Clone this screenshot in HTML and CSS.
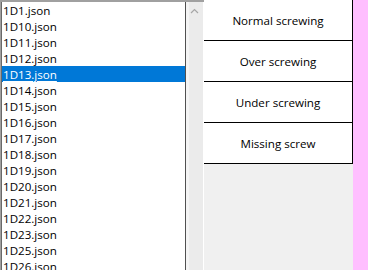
FILE: index.html
```html
<!DOCTYPE html>
<html>
<head>
<meta charset="utf-8">
<link rel="stylesheet" href="styles.css">
</head>
<body>
<div class="app">
  <div class="listbox">
    <ul class="items">
      <li>1D1.json</li>
      <li>1D10.json</li>
      <li>1D11.json</li>
      <li>1D12.json</li>
      <li class="sel"><span>1D13.json</span></li>
      <li>1D14.json</li>
      <li>1D15.json</li>
      <li>1D16.json</li>
      <li>1D17.json</li>
      <li>1D18.json</li>
      <li>1D19.json</li>
      <li>1D20.json</li>
      <li>1D21.json</li>
      <li>1D22.json</li>
      <li>1D23.json</li>
      <li>1D25.json</li>
      <li>1D26.json</li>
    </ul>
    <div class="scrollbar">
      <svg class="arrow" width="9" height="6" viewBox="0 0 9 6"><path d="M1 5 L4.5 1.5 L8 5" fill="none" stroke="#a6a6a6" stroke-width="1.2"/></svg>
    </div>
  </div>
  <div class="buttons">
    <div class="btn">Normal screwing</div>
    <div class="btn">Over screwing</div>
    <div class="btn">Under screwing</div>
    <div class="btn">Missing screw</div>
  </div>
  <div class="pink"></div>
</div>
</body>
</html>
```
FILE: styles.css
```css
html, body {
  margin: 0;
  padding: 0;
  width: 368px;
  height: 270px;
  overflow: hidden;
  background: #f0f0f0;
  font-family: "Open Sans", "Noto Sans", sans-serif;
  font-size: 11.6px;
}
.app {
  display: flex;
  height: 270px;
}
.listbox {
  display: flex;
  flex: none;
  width: 202px;
  height: 268px;
  border-top: 2px solid #a0a0a0;
  border-left: 1px solid #a0a0a0;
  box-shadow: inset 1px 0 0 #696969;
  background: #fff;
  padding-left: 1px;
  box-sizing: content-box;
}
.items {
  list-style: none;
  margin: 0;
  padding: 0;
  width: 183px;
  flex: none;
  background: #fff;
  border-right: 1px solid #505050;
}
.items li {
  height: 16px;
  line-height: 17px;
  padding-left: 1px;
  color: #000;
  white-space: nowrap;
}
.items li.sel {
  background: #0078d7;
  color: #fff;
}
.items li.sel span {
  text-decoration: underline;
  text-underline-offset: 2px;
}
.scrollbar {
  width: 17px;
  flex: none;
  background: #ebebeb;
  box-shadow: inset 3px 0 0 #f4f4f4;
  display: flex;
  justify-content: center;
  padding-top: 6px;
  box-sizing: border-box;
}
.arrow {
  display: block;
}
.buttons {
  display: flex;
  flex-direction: column;
  width: 149px;
  flex: none;
  align-self: flex-start;
}
.btn {
  height: 40px;
  line-height: 42px;
  text-align: center;
  background: #fff;
  color: #000;
  border-bottom: 1px solid #000;
  border-right: 1px solid #000;
}
.pink {
  flex: 1;
  background: #ffbfff;
}
```
